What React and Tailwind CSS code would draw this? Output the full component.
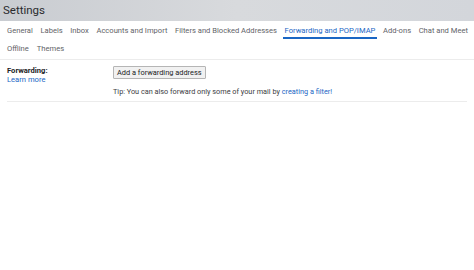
import React from "react";

const tabs = [
  "General",
  "Labels",
  "Inbox",
  "Accounts and Import",
  "Filters and Blocked Addresses",
  "Forwarding and POP/IMAP",
  "Add-ons",
  "Chat and Meet",
];

export default function App() {
  return (
    <div className="w-[474px] h-[270px] bg-white overflow-hidden" style={{ fontFamily: "Roboto, 'Liberation Sans', sans-serif" }}>
      <div className="h-[21px] bg-gradient-to-r from-[#c9ccd1] via-[#d8dadd] to-[#d3d6db] flex items-center pl-[3px] pt-[1px]">
        <span className="text-[11.5px] text-[#2a2b2e] leading-none">Settings</span>
      </div>
      <div className="border-b border-[#ececec] pb-[1px]">
        <div className="flex items-center pl-[7px] gap-[7.6px] h-[19px] text-[7.6px] text-[#5f6368]">
          {tabs.map((t) => (
            <div key={t} className={"relative h-full flex items-center whitespace-nowrap " + (t === "Forwarding and POP/IMAP" ? "text-[#1a66c4]" : "")}>
              {t}
              {t === "Forwarding and POP/IMAP" && (
                <div className="absolute left-[-2px] right-[-2px] bottom-[1px] h-[2px] bg-[#1a66c4]" />
              )}
            </div>
          ))}
        </div>
        <div className="flex items-center pl-[7px] gap-[8px] h-[18px] text-[7.6px] text-[#5f6368]">
          <div>Offline</div>
          <div>Themes</div>
        </div>
      </div>
      <div className="mx-[7px] border-b border-[#ececec] flex pt-[6px] pb-[6px]">
        <div className="w-[106px] flex flex-col text-[7.6px] leading-[9px]">
          <span className="font-bold text-[#202124]">Forwarding:</span>
          <span className="text-[#1a66c4]">Learn more</span>
        </div>
        <div className="flex flex-col items-start">
          <button className="border border-[#b5b5b5] bg-[#f1f1f1] rounded-[1px] px-[3px] h-[13px] text-[7.4px] leading-none text-[#202124]">
            Add a forwarding address
          </button>
          <div className="mt-[9px] text-[7.3px] text-[#3c4043] leading-none">
            Tip: You can also forward only some of your mail by <span className="text-[#1a66c4]">creating a filter!</span>
          </div>
        </div>
      </div>
    </div>
  );
}
